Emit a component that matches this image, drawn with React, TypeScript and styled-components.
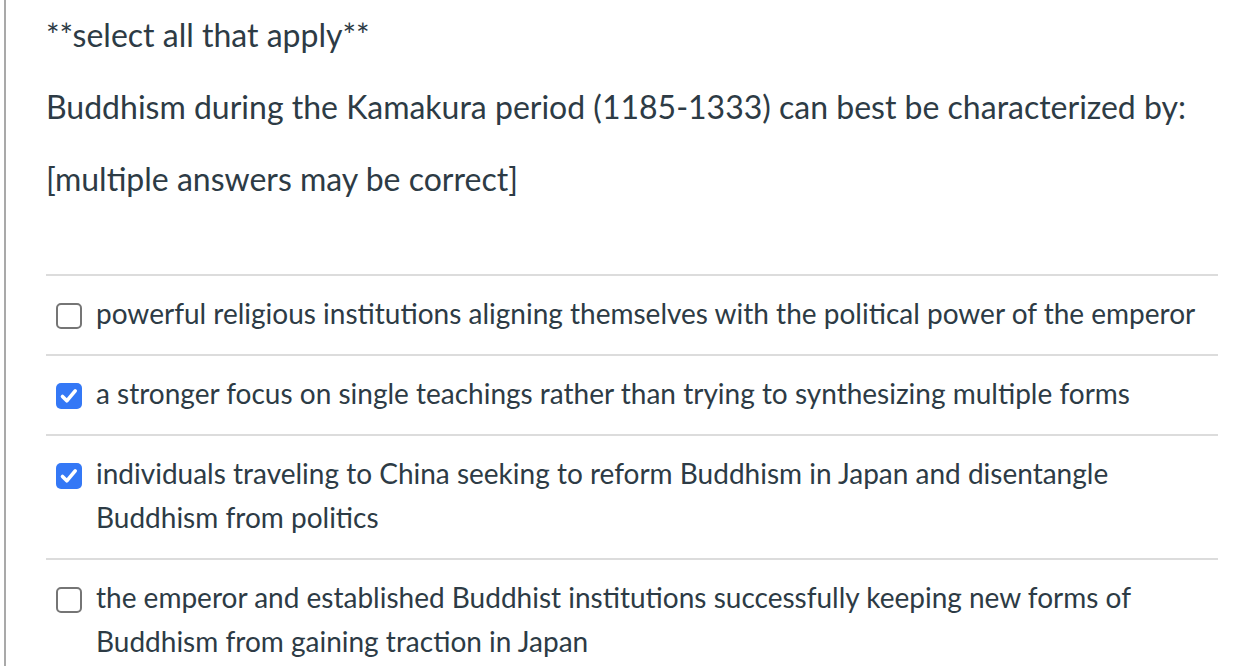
import React from "react";
import styled, { createGlobalStyle } from "styled-components";

const GlobalStyle = createGlobalStyle`
  html, body { margin: 0; padding: 0; background: #ffffff; }
  body { font-family: Lato, "Noto Sans", sans-serif; color: #2d3b45; }
`;

const Page = styled.div`
  display: flex;
  padding-left: 4px;
  min-height: 666px;
  box-sizing: border-box;
`;

const Frame = styled.div`
  flex: 1;
  border-left: 2px solid #a9a9a9;
  padding: 13px 40px 0 40px;
`;

const Para = styled.p<{ $last?: boolean }>`
  margin: 0 0 ${(p) => (p.$last ? 0 : 28)}px 0;
  font-size: 32px;
  line-height: 44px;
`;

const Answers = styled.div`
  margin-top: 73px;
  display: flex;
  flex-direction: column;
`;

const Row = styled.label`
  display: flex;
  align-items: flex-start;
  gap: 14px;
  border-top: 2px solid #dcdcdc;
  padding: 15px 0 19px 10px;
  font-size: 28px;
  line-height: 44px;
`;

const Box = styled.span<{ $checked: boolean }>`
  flex: 0 0 auto;
  width: 26px;
  height: 26px;
  margin-top: 12px;
  box-sizing: border-box;
  border-radius: 5px;
  border: ${(p) => (p.$checked ? "none" : "2px solid #757575")};
  background: ${(p) => (p.$checked ? "#3478f6" : "#ffffff")};
  display: flex;
  align-items: center;
  justify-content: center;
`;

const Text = styled.span`
  flex: 1;
`;

const answers = [
  { text: "powerful religious institutions aligning themselves with the political power of the emperor", checked: false },
  { text: "a stronger focus on single teachings rather than trying to synthesizing multiple forms", checked: true },
  { text: "individuals traveling to China seeking to reform Buddhism in Japan and disentangle Buddhism from politics", checked: true },
  { text: "the emperor and established Buddhist institutions successfully keeping new forms of Buddhism from gaining traction in Japan", checked: false },
];

const Check = () => (
  <svg width="22" height="22" viewBox="0 0 22 22" aria-hidden>
    <path d="M4.5 11.5 L8.8 15.8 L17.2 5.8" fill="none" stroke="#ffffff" strokeWidth="3.6" strokeLinecap="round" strokeLinejoin="round" />
  </svg>
);

export default function App() {
  return (
    <>
      <GlobalStyle />
      <Page>
        <Frame>
          <Para>**select all that apply**</Para>
          <Para>Buddhism during the Kamakura period (1185-1333) can best be characterized by:</Para>
          <Para $last>[multiple answers may be correct]</Para>
          <Answers>
            {answers.map((a) => (
              <Row key={a.text}>
                <Box $checked={a.checked}>{a.checked && <Check />}</Box>
                <Text>{a.text}</Text>
              </Row>
            ))}
          </Answers>
        </Frame>
      </Page>
    </>
  );
}
